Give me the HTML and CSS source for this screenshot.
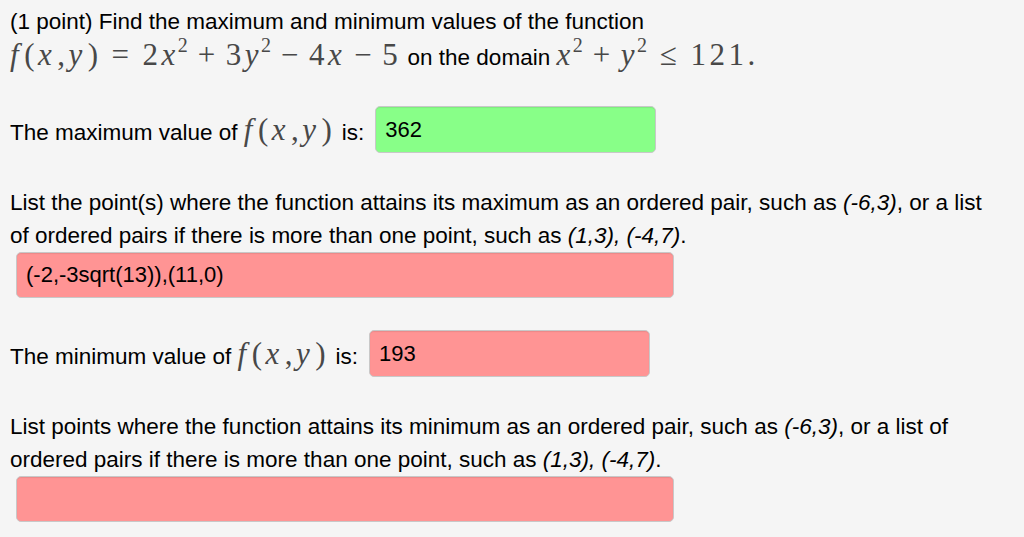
FILE: index.html
```html
<!DOCTYPE html>
<html lang="en">
<head>
    <meta charset="UTF-8">
    <title>Problem</title>
    <link rel="stylesheet" href="styles.css">
</head>
<body>
    <div class="problem">
        <p class="intro">
            (1 point) Find the maximum and minimum values of the function<br>
            <span class="math"><i>f</i>(<i>x</i>,<i>y</i>)<span class="rel">=</span>2<i>x</i><sup>2</sup><span class="bin">+</span>3<i>y</i><sup>2</sup><span class="bin">&minus;</span>4<i>x</i><span class="bin">&minus;</span>5</span>
            on the domain
            <span class="math"><i>x</i><sup>2</sup><span class="bin">+</span><i>y</i><sup>2</sup><span class="rel">&le;</span>121.</span>
        </p>

        <div class="answer-row">
            <span class="label">The maximum value of <span class="math"><i>f</i>(<i>x</i>,<i>y</i>)</span> is:</span>
            <input type="text" class="answer correct short" value="362">
        </div>

        <p class="question">
            List the point(s) where the function attains its maximum as an ordered pair, such as <i>(-6,3)</i>, or a list
            of ordered pairs if there is more than one point, such as <i>(1,3), (-4,7)</i>.
        </p>
        <input type="text" class="answer incorrect wide" value="(-2,-3sqrt(13)),(11,0)">

        <div class="answer-row">
            <span class="label">The minimum value of <span class="math"><i>f</i>(<i>x</i>,<i>y</i>)</span> is:</span>
            <input type="text" class="answer incorrect short" value="193">
        </div>

        <p class="question">
            List points where the function attains its minimum as an ordered pair, such as <i>(-6,3)</i>, or a list of
            ordered pairs if there is more than one point, such as <i>(1,3), (-4,7)</i>.
        </p>
        <input type="text" class="answer incorrect wide" value="">
    </div>
</body>
</html>
```

FILE: styles.css
```css
* {
    margin: 0;
    padding: 0;
    box-sizing: border-box;
}

body {
    background: #f5f5f5;
    color: #000;
    font-family: 'Liberation Sans', Arial, sans-serif;
    font-size: 22.5px;
}

.problem {
    width: 995px;
    padding: 5px 10px;
}

.intro, .question {
    line-height: 33px;
}

.math {
    font-family: 'Liberation Serif', 'Times New Roman', serif;
    font-size: 31px;
    letter-spacing: 3.5px;
    color: #484848;
}

.math i {
    font-style: italic;
    padding-right: 2px;
}

.math sup {
    font-size: 20px;
    line-height: 0;
    letter-spacing: 0;
    margin: 0 3px 0 -3px;
    vertical-align: 13px;
}

.math .rel {
    margin: 0 10px;
}

.math .bin {
    margin: 0 7px;
}

.answer-row {
    display: flex;
    align-items: center;
    margin: 32px 0 33px;
}

.answer-row .label {
    margin-right: 11px;
}

.answer {
    display: block;
    height: 47px;
    padding: 0 9px;
    border: 1px solid #c8c8c8;
    border-radius: 5px;
    font-family: 'Liberation Sans', Arial, sans-serif;
    font-size: 22px;
    color: #000;
    box-shadow: inset 0 1px 1px rgba(0, 0, 0, 0.08);
}

.answer.short {
    width: 281px;
}

.answer.wide {
    width: 658px;
    height: 46px;
    margin-left: 6px;
}

.correct {
    background: #8f8;
}

.incorrect {
    background: #ff9494;
}
```
